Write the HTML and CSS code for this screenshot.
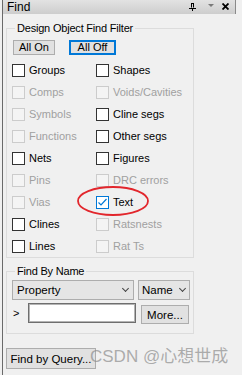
FILE: index.html
```html
<!DOCTYPE html>
<html lang="en">
<head>
    <meta charset="UTF-8">
    <title>Find</title>
    <link rel="stylesheet" href="styles.css">
</head>
<body>
    <div class="pane">
        <div class="titlebar">
            <span class="title">Find</span>
            <span class="tools">
                <svg class="pin" width="7" height="8" viewBox="0 0 7 8"><path d="M2 0.5h3M2.5 0.5v4M4.5 0.5v4M0 5.5h7M3.5 5.5v2.5" stroke="#000" stroke-width="1" fill="none"/></svg>
                <svg class="drop" width="6" height="4" viewBox="0 0 6 4"><path d="M0 0h6L3 3z" fill="#7a7a7a"/></svg>
                <svg class="close" width="7" height="7" viewBox="0 0 7 7"><path d="M0.5 0.5l6 6M6.5 0.5l-6 6" stroke="#000" stroke-width="1.8"/></svg>
            </span>
        </div>
        <div class="content">
            <fieldset class="group filter">
                <legend>Design Object Find Filter</legend>
                <div class="btn-row">
                    <button class="btn all-on">All On</button>
                    <button class="btn all-off">All Off</button>
                </div>
                <div class="checks">
                    <label class="chk"><span class="box"></span>Groups</label>
                    <label class="chk"><span class="box"></span>Shapes</label>
                    <label class="chk off"><span class="box"></span>Comps</label>
                    <label class="chk off"><span class="box"></span>Voids/Cavities</label>
                    <label class="chk off"><span class="box"></span>Symbols</label>
                    <label class="chk"><span class="box"></span>Cline segs</label>
                    <label class="chk off"><span class="box"></span>Functions</label>
                    <label class="chk"><span class="box"></span>Other segs</label>
                    <label class="chk"><span class="box"></span>Nets</label>
                    <label class="chk"><span class="box"></span>Figures</label>
                    <label class="chk off"><span class="box"></span>Pins</label>
                    <label class="chk off"><span class="box"></span>DRC errors</label>
                    <label class="chk off"><span class="box"></span>Vias</label>
                    <label class="chk on"><span class="box"><svg width="11" height="11" viewBox="0 0 11 11"><path d="M1.5 5.5l2.5 2.5 5.5-6" stroke="#0078d7" stroke-width="1.2" fill="none"/></svg></span>Text</label>
                    <label class="chk"><span class="box"></span>Clines</label>
                    <label class="chk off"><span class="box"></span>Ratsnests</label>
                    <label class="chk"><span class="box"></span>Lines</label>
                    <label class="chk off"><span class="box"></span>Rat Ts</label>
                </div>
            </fieldset>
            <fieldset class="group byname">
                <legend>Find By Name</legend>
                <div class="combo-row">
                    <div class="combo prop">Property<span class="chev"></span></div>
                    <div class="combo name">Name<span class="chev"></span></div>
                </div>
                <div class="input-row">
                    <span class="arrow">&gt;</span>
                    <div class="field"></div>
                    <button class="btn more">More...</button>
                </div>
            </fieldset>
            <button class="btn query">Find by Query...</button>
        </div>
    </div>
    <svg class="mark" width="74" height="32" viewBox="0 0 74 32"><ellipse cx="37" cy="16" rx="35" ry="14" stroke="#e2262c" stroke-width="1.8" fill="none"/></svg>
    <div class="watermark">CSDN @心想世成</div>
</body>
</html>
```

FILE: styles.css
```css
body {
    margin: 0;
    background: #f0f0f0;
    font-family: 'Liberation Sans', Arial, 'Noto Sans CJK SC', sans-serif;
    font-size: 11px;
    color: #000;
    width: 242px;
    height: 375px;
    overflow: hidden;
    position: relative;
}
.pane {
    margin-left: 2px;
    border-left: 1px solid #6a6a6a;
    height: 375px;
    width: 233px;
}
.titlebar {
    height: 14px;
    background: linear-gradient(to bottom, #e2e2e2, #cdcdcd);
    border-right: 1px solid #8a8a8a;
    display: flex;
    align-items: center;
    justify-content: space-between;
}
.title {
    font-size: 12px;
    padding-left: 4px;
    line-height: 14px;
}
.tools {
    display: flex;
    align-items: center;
}
.pin {
    margin-right: 12px;
}
.drop {
    margin-right: 8px;
    margin-top: -2px;
}
.close {
    margin-right: 6px;
    margin-top: -1px;
}
.content {
    padding: 8px 0 0 3px;
}
.group {
    margin: 0;
    width: 188px;
    box-sizing: border-box;
    border: 1px solid #dcdcdc;
    padding: 0 0 0 5px;
}
.group legend {
    padding: 0 2px;
    margin-left: 3px;
    line-height: 13px;
    letter-spacing: -0.2px;
}
.btn {
    font-family: inherit;
    font-size: 11px;
    background: #e1e1e1;
    border: 1px solid #adadad;
    padding: 0;
    color: #000;
    box-sizing: border-box;
}
.btn-row {
    display: flex;
    margin-top: 5px;
    padding-left: 1px;
}
.all-on {
    width: 42px;
    height: 15px;
    line-height: 13px;
}
.all-off {
    margin-left: 14px;
    width: 47px;
    height: 15px;
    line-height: 11px;
    border: 2px solid #0078d7;
}
.checks {
    display: grid;
    grid-template-columns: 84px 1fr;
    grid-auto-rows: 22px;
    margin-top: 4px;
}
.chk {
    display: flex;
    align-items: center;
}
.box {
    width: 13px;
    height: 13px;
    box-sizing: border-box;
    border: 1px solid #333;
    background: #fff;
    margin-right: 4px;
    display: flex;
    align-items: center;
    justify-content: center;
}
.chk.off {
    color: #a0a0a0;
}
.chk.off .box {
    border-color: #cccccc;
    background: #f4f4f4;
}
.chk.on .box {
    border-color: #0078d7;
}
.byname {
    margin-top: 7px;
    padding-bottom: 9px;
}
.combo-row {
    display: flex;
    margin-top: 2px;
}
.combo {
    height: 20px;
    box-sizing: border-box;
    background: #e5e5e5;
    border: 1px solid #adadad;
    display: flex;
    align-items: center;
    justify-content: space-between;
    padding: 0 5px 0 4px;
    font-size: 11.5px;
}
.prop {
    width: 122px;
}
.name {
    width: 52px;
    margin-left: 4px;
    padding: 0 4px 0 3px;
}
.chev {
    width: 4px;
    height: 4px;
    border-right: 1px solid #444;
    border-bottom: 1px solid #444;
    transform: rotate(45deg);
    margin-top: -3px;
    flex-shrink: 0;
}
.input-row {
    display: flex;
    align-items: flex-start;
    margin-top: 3px;
}
.arrow {
    width: 15px;
    padding-left: 1px;
    line-height: 20px;
}
.field {
    width: 108px;
    height: 20px;
    box-sizing: border-box;
    background: #fff;
    border: 1px solid #6e6e6e;
    box-shadow: inset 0 0 0 1px #b4b4b4;
}
.more {
    margin-left: 5px;
    margin-top: 2px;
    width: 48px;
    height: 19px;
    font-size: 11.5px;
}
.query {
    margin-top: 14px;
    width: 90px;
    height: 21px;
    font-size: 11.5px;
}
.mark {
    position: absolute;
    left: 76px;
    top: 185px;
}
.watermark {
    position: absolute;
    left: 90px;
    top: 347px;
    font-size: 17px;
    line-height: 20px;
    color: rgba(140, 140, 140, 0.7);
    white-space: nowrap;
}
```
